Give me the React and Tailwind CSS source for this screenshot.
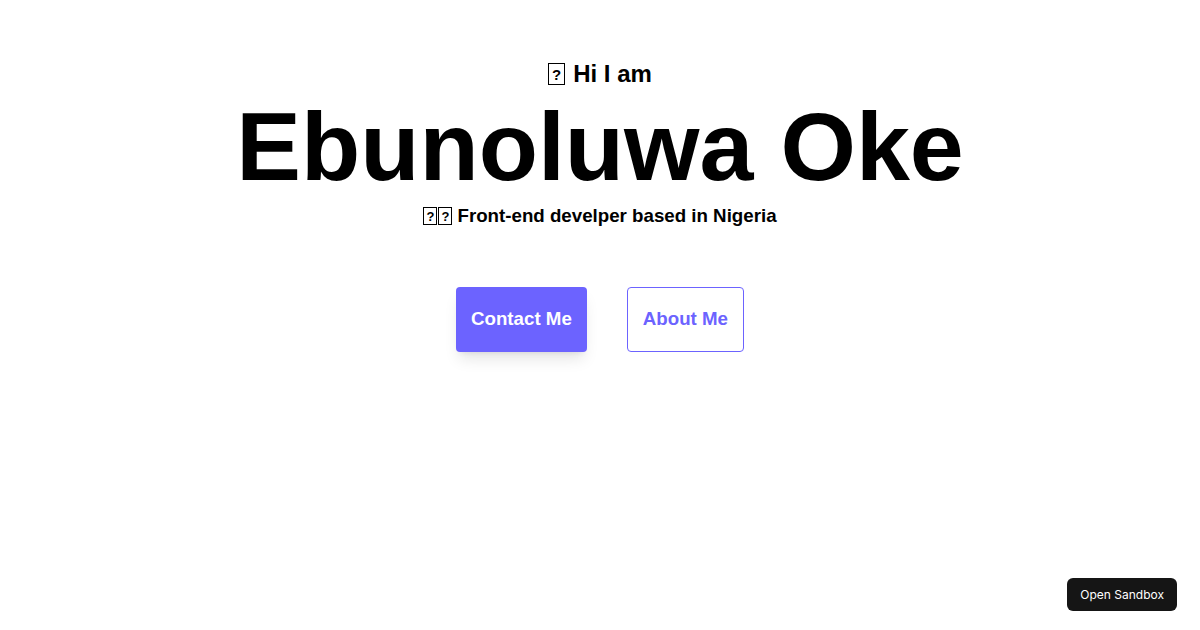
import React from 'react'

// missing-glyph box, the way the emoji show up in the screenshot
const Tofu = ({ className }) => (
  <span
    aria-hidden="true"
    className={`inline-flex items-center justify-center border-[1.5px] border-black leading-none font-bold ${className}`}
  >
    ?
  </span>
)

const App = () => {
  return (
    <div className="relative min-h-[630px] w-full bg-white font-['Liberation_Sans',Arial,sans-serif] text-black">
      <section className="flex flex-col items-center pt-[58px]">
        <h2 className="flex items-center gap-[8px] text-2xl leading-[32px] font-bold">
          <Tofu className="h-[22px] w-[17px] text-[15px]" />
          <span>Hi I am</span>
        </h2>
        <h1 className="mt-[8px] text-[97px] leading-[97px] font-bold">Ebunoluwa Oke</h1>
        <h3 className="mt-[7px] flex items-center gap-[5px] text-[18.72px] leading-[28px] font-bold">
          <span className="flex gap-px">
            <Tofu className="h-[18px] w-[14px] text-[13px]" />
            <Tofu className="h-[18px] w-[14px] text-[13px]" />
          </span>
          <span>Front-end develper based in Nigeria</span>
        </h3>

        <div className="mt-[57px] flex gap-10">
          <button className="h-[65px] rounded px-[15px] bg-[#6c63ff] text-[18.72px] font-bold text-white shadow-lg">
            Contact Me
          </button>
          <button className="h-[65px] rounded px-[15px] border border-[#6c63ff] bg-white text-[18.72px] font-bold text-[#6c63ff]">
            About Me
          </button>
        </div>
      </section>

      <a className="fixed right-[23px] bottom-[19px] flex h-[33px] items-center rounded-md bg-[#151515] px-[13px] font-['Inter',sans-serif] text-[12px] text-white">
        Open Sandbox
      </a>
    </div>
  )
}

export default App
